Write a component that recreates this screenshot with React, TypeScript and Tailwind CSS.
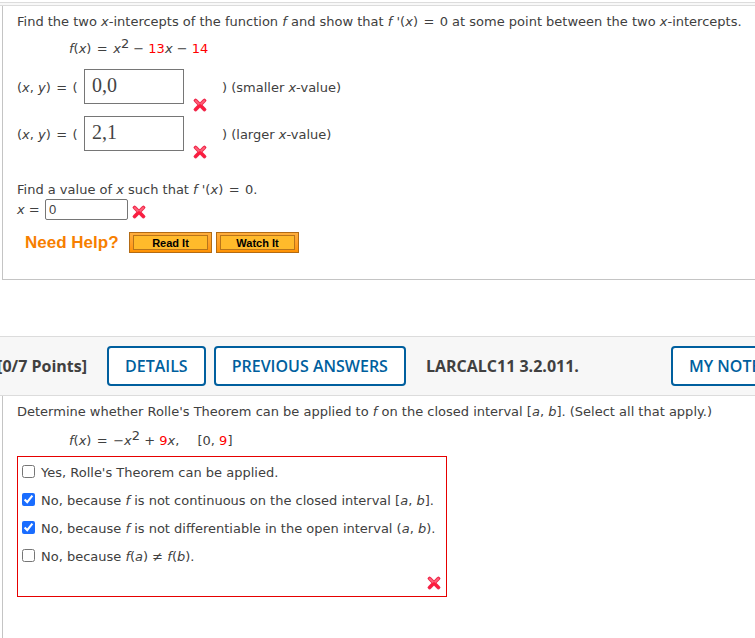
import type { ReactNode } from "react";

function Wrong() {
  return (
    <svg role="img" aria-label="Incorrect" viewBox="0 0 14 14" className="w-3.5 h-3.5 shrink-0">
      <path d="M2.6 2.6 L11.4 11.4 M11.4 2.6 L2.6 11.4" stroke="#e8284a" strokeWidth="3.6" strokeLinecap="square" strokeLinejoin="round" opacity="0.35" />
      <path d="M2.6 2.6 L11.4 11.4 M11.4 2.6 L2.6 11.4" stroke="#f0284b" strokeWidth="3.6" strokeLinecap="round" />
      <path d="M2.8 2.8 L7 7 L11.2 2.8" stroke="#ff6279" strokeWidth="1.8" strokeLinecap="round" fill="none" />
      <path d="M2.8 11.2 L7 7 L11.2 11.2" stroke="#ff1a3c" strokeWidth="1.8" strokeLinecap="round" fill="none" />
    </svg>
  );
}

function Squared() {
  return <sup className="text-[13px] leading-none align-[5px] static">2</sup>;
}

// equals sign with slightly wider spacing on both sides
function Eq() {
  return <>{" \u200a=\u200a "}</>;
}

interface PointRowProps {
  id: string;
  value: string;
  size: string;
}

function PointRow({ id, value, size }: PointRowProps) {
  return (
    <div className="flex items-start h-[47px]">
      <label htmlFor={id} className="w-[67px] leading-[37px] whitespace-nowrap">
        (<i>x</i>, <i>y</i>)<Eq />(
      </label>
      <input
        id={id}
        defaultValue={value}
        className="w-[100px] h-[35px] border border-[#767676] bg-white px-[7px] pb-0.5 font-['Liberation_Serif',serif] text-xl text-[#444]"
      />
      <div className="pt-[29px] pl-[9px] pr-[15px]">
        <Wrong />
      </div>
      <span className="leading-[37px]">
        ) ({size} <i>x</i>-value)
      </span>
    </div>
  );
}

function HelpButton({ children }: { children: ReactNode }) {
  return (
    <button className="w-[83px] h-[21px] border border-[#b36b14] bg-linear-to-b from-[#ffae3c] to-[#ff9200] px-[3px] py-0.5">
      <span className="flex items-center justify-center h-full border border-[#b8741a] bg-[#ffba2b] font-['Liberation_Sans',Arial,sans-serif] font-bold text-[11px] text-black">
        {children}
      </span>
    </button>
  );
}

function HeaderButton({ children }: { children: ReactNode }) {
  return (
    <button className="h-10 shrink-0 rounded border-2 border-[#005f9e] bg-white px-4 text-base font-semibold text-[#005f9e] whitespace-nowrap">
      {children}
    </button>
  );
}

interface ChoiceProps {
  checked?: boolean;
  children: ReactNode;
}

function Choice({ checked, children }: ChoiceProps) {
  return (
    <label className="flex items-start gap-1.5 h-7 whitespace-nowrap">
      <input type="checkbox" defaultChecked={checked} className="w-[13px] h-[13px] shrink-0 accent-[#1a6dff]" />
      <span className="leading-4">{children}</span>
    </label>
  );
}

export default function App() {
  return (
    <main className="min-h-screen flex flex-col overflow-hidden bg-white font-[Verdana,'DejaVu_Sans',sans-serif] text-[13px] leading-[18px] text-[#404040]">
      <div className="mt-0.5 h-1 shrink-0 border-y border-[#dcdcdc] bg-[#f8f8f8]" />

      <section className="ml-0.5 h-[274px] shrink-0 border-l border-b border-[#c4c4c4] pl-3.5 pt-[7px]">
        <p className="whitespace-nowrap">
          Find the two <i>x</i>-intercepts of the function <i>f</i> and show that <i>f</i> '(<i>x</i>)<Eq />0 at some
          point between the two <i>x</i>-intercepts.
        </p>
        <p className="h-[38px] pt-1.5 pl-13">
          <i>f</i>(<i>x</i>)<Eq />
          <i>x</i>
          <Squared /> − <span className="text-[#f00]">13</span>
          <i>x</i> − <span className="text-[#f00]">14</span>
        </p>
        <PointRow id="smaller" value="0,0" size="smaller" />
        <PointRow id="larger" value="2,1" size="larger" />
        <p className="pt-[18px]">
          Find a value of <i>x</i> such that <i>f</i> '(<i>x</i>)<Eq />0.
        </p>
        <div className="flex items-center">
          <label htmlFor="critical" className="w-7 whitespace-nowrap">
            <i>x</i> =
          </label>
          <input
            id="critical"
            defaultValue="0"
            className="w-[83px] h-[21px] rounded-xs border border-[#767676] bg-white px-[3px] font-['Liberation_Sans',Arial,sans-serif]"
          />
          <div className="pt-[5px] pl-1">
            <Wrong />
          </div>
        </div>
        <div className="flex items-center gap-1 pt-3 pl-2">
          <strong className="w-[100px] font-['Liberation_Sans',Arial,sans-serif] text-[17px] leading-5 text-[#f77f00] whitespace-nowrap">
            Need Help?
          </strong>
          <HelpButton>Read It</HelpButton>
          <HelpButton>Watch It</HelpButton>
        </div>
      </section>

      <header className="mt-14 flex h-[60px] shrink-0 items-center border-y border-[#dcdcdc] bg-[#f7f7f7] font-['Open_Sans',sans-serif] text-base font-bold">
        <span className="w-[87px] mr-5 flex shrink-0 justify-end whitespace-nowrap">[0/7 Points]</span>
        <div className="flex shrink-0 gap-2">
          <HeaderButton>DETAILS</HeaderButton>
          <HeaderButton>PREVIOUS ANSWERS</HeaderButton>
        </div>
        <span className="w-[245px] shrink-0 ml-5 whitespace-nowrap">LARCALC11 3.2.011.</span>
        <HeaderButton>MY NOTES</HeaderButton>
      </header>

      <section className="ml-0.5 grow border-l border-[#c4c4c4] pl-3.5 pt-[7px]">
        <p className="whitespace-nowrap">
          Determine whether Rolle's Theorem can be applied to <i>f</i> on the closed interval [<i>a</i>, <i>b</i>].
          (Select all that apply.)
        </p>
        <p className="h-[35px] pt-2 pl-13">
          <i>f</i>(<i>x</i>)<Eq />−<i>x</i>
          <Squared /> + <span className="text-[#f00]">9</span>
          <i>x</i>, <span className="pl-3.5">[0, <span className="text-[#f00]">9</span>]</span>
        </p>
        <div className="w-[430px] h-[141px] border border-[#e60000] pl-1 pr-[5px] pt-2">
          <Choice checked={false}>Yes, Rolle's Theorem can be applied.</Choice>
          <Choice checked>
            No, because <i>f</i> is not continuous on the closed interval [<i>a</i>, <i>b</i>].
          </Choice>
          <Choice checked>
            No, because <i>f</i> is not differentiable in the open interval (<i>a</i>, <i>b</i>).
          </Choice>
          <Choice checked={false}>
            No, because <i>f</i>(<i>a</i>) ≠ <i>f</i>(<i>b</i>).
          </Choice>
          <div className="flex justify-end -mt-px">
            <Wrong />
          </div>
        </div>
      </section>
    </main>
  );
}
